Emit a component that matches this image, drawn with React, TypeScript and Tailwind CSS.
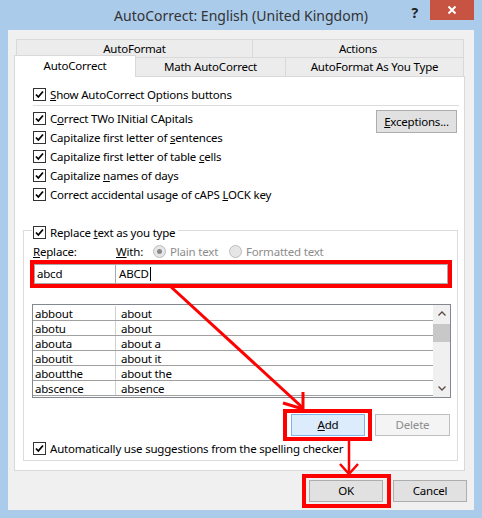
import type { ReactNode } from "react";

function Box() {
  return (
    <span className="flex h-[13px] w-[13px] shrink-0 items-center justify-center border border-[#333] bg-white">
      <svg width="11" height="11" viewBox="0 0 11 11">
        <path d="M2 5.5 L4.3 8 L9 2.5" fill="none" stroke="#000" strokeWidth="1.8" />
      </svg>
    </span>
  );
}

function Check({ children }: { children: ReactNode }) {
  return (
    <div className="flex h-[19px] items-center">
      <Box />
      <span className="ml-[4px] whitespace-nowrap">{children}</span>
    </div>
  );
}

function Radio({ on }: { on?: boolean }) {
  return (
    <span className="flex h-[13px] w-[13px] shrink-0 items-center justify-center rounded-full border border-[#bcbcbc] bg-[#e6e6e6]">
      {on && <span className="h-[5px] w-[5px] rounded-full bg-[#8a8a8a]" />}
    </span>
  );
}

const rows = [
  ["abbout", "about"],
  ["abotu", "about"],
  ["abouta", "about a"],
  ["aboutit", "about it"],
  ["aboutthe", "about the"],
  ["abscence", "absence"],
];

const tab = "flex items-center justify-center border-l border-t border-[#d9d9d9] bg-[#ececec] whitespace-nowrap";
const btn = "flex h-[22px] w-[74px] items-center justify-center border border-[#adadad] bg-[#e1e1e1]";

export default function App() {
  return (
    <div className="relative h-[518px] w-[482px] overflow-hidden bg-[#abcbeb] font-['Noto_Sans',sans-serif] text-[11.5px] tracking-[-0.2px] text-black">
      {/* title bar */}
      <div className="grid h-[30px] grid-cols-[1fr_auto_1fr] items-center">
        <div />
        <span className="text-[14px] tracking-normal text-[#333]">AutoCorrect: English (United Kingdom)</span>
        <div className="flex h-full items-start justify-end pr-[8px]">
          <span className="mr-[12px] mt-[2px] text-[14px] font-bold text-[#222]">?</span>
          <div className="flex h-[20px] w-[44px] items-center justify-center bg-[#c75343]">
            <svg width="10" height="10" viewBox="0 0 10 10">
              <path d="M1.5 1.5 L8.5 8.5 M8.5 1.5 L1.5 8.5" stroke="#fff" strokeWidth="2" />
            </svg>
          </div>
        </div>
      </div>

      {/* dialog body */}
      <div className="mx-[8px] h-[480px] bg-[#f0f0f0] pt-[9px]">
        <div className="ml-[8px] flex h-[18px] w-[448px]">
          <div className={`${tab} w-[236px]`}>AutoFormat</div>
          <div className={`${tab} flex-1 border-r`}>Actions</div>
        </div>
        <div className="ml-[6px] flex h-[19px] w-[450px] items-end">
          <div className="relative z-10 -mb-[1px] flex h-[22px] w-[122px] items-center justify-center border-l border-r border-t border-[#d9d9d9] bg-white pb-[2px]">
            AutoCorrect
          </div>
          <div className={`${tab} h-[19px] w-[149px] border-l-0`}>Math AutoCorrect</div>
          <div className={`${tab} h-[19px] flex-1 border-r`}>AutoFormat As You Type</div>
        </div>

        <div className="ml-[6px] h-[395px] w-[451px] border border-[#d9d9d9] bg-white pt-[8px]">
          <div className="ml-[18px]">
            <Check>
              <u>S</u>how AutoCorrect Options buttons
            </Check>
          </div>
          <div className="ml-[18px] mt-[1px] h-[1px] w-[426px] bg-[#dcdcdc]" />
          <div className="mt-[3px] flex justify-between pl-[18px] pr-[7px]">
            <div>
              <Check>
                C<u>o</u>rrect TWo INitial CApitals
              </Check>
              <Check>
                Capitalize first letter of <u>s</u>entences
              </Check>
              <Check>
                Capitalize first letter of table <u>c</u>ells
              </Check>
              <Check>
                Capitalize <u>n</u>ames of days
              </Check>
              <Check>
                Correct accidental usage of cAPS <u>L</u>OCK key
              </Check>
            </div>
            <div className={`${btn} mt-[1px] h-[23px] w-[81px]`}>
              <u>E</u>xceptions...
            </div>
          </div>

          {/* replace group */}
          <div className="ml-[8px] mt-[26px] h-[231px] w-[435px] border border-[#dcdcdc]">
            <div className="-mt-[8px] ml-[8px] flex h-[19px] w-fit items-center bg-white pl-[1px] pr-[3px]">
              <Box />
              <span className="ml-[4px] whitespace-nowrap">
                Replace <u>t</u>ext as you type
              </span>
            </div>
            <div className="mt-[1px] ml-[9px] flex h-[17px] items-center">
              <span className="w-[83px]">
                <u>R</u>eplace:
              </span>
              <span className="w-[37px]">
                <u>W</u>ith:
              </span>
              <Radio on />
              <span className="ml-[4px] w-[59px] text-[#8c8c8c]">Plain text</span>
              <Radio />
              <span className="ml-[4px] text-[#8c8c8c]">Formatted text</span>
            </div>
            <div className="ml-[6px] flex h-[28px] w-[422px] border-[4px] border-[#ff0000]">
              <div className="flex w-[82px] items-center border border-[#a8a8a8] pl-[2px]">abcd</div>
              <div className="flex flex-1 items-center border border-l-0 border-[#a8a8a8] pl-[3px]">
                ABCD<span className="ml-[1px] h-[14px] w-[1px] bg-black" />
              </div>
            </div>

            {/* list */}
            <div className="ml-[8px] mt-[16px] flex h-[94px] w-[419px] border border-[#828790]">
              <div className="flex-1 pt-[1px]">
                {rows.map(([a, b]) => (
                  <div key={a} className="flex h-[15px] items-center border-b border-[#a0a0a0] leading-[13px]">
                    <span className="flex h-full w-[83px] items-center border-r border-[#d0d0d0] pl-[2px]">{a}</span>
                    <span className="pl-[5px]">{b}</span>
                  </div>
                ))}
              </div>
              <div className="flex w-[17px] flex-col bg-[#f0f0f0]">
                <div className="flex h-[17px] items-center justify-center">
                  <svg width="8" height="5" viewBox="0 0 8 5">
                    <path d="M0.5 4.5 L4 1 L7.5 4.5" fill="none" stroke="#5a4a44" strokeWidth="1.3" />
                  </svg>
                </div>
                <div className="mt-[2px] h-[18px] bg-[#c8c8c8]" />
                <div className="flex-1" />
                <div className="flex h-[17px] items-center justify-center">
                  <svg width="8" height="5" viewBox="0 0 8 5">
                    <path d="M0.5 0.5 L4 4 L7.5 0.5" fill="none" stroke="#5a4a44" strokeWidth="1.3" />
                  </svg>
                </div>
              </div>
            </div>

            <div className="mt-[11px] flex justify-end pr-[7px]">
              <div className="h-[32px] w-[89px] border-[4px] border-[#ff0000] pl-[4px] pt-[1px]">
                <div className="flex h-[22px] w-[74px] items-center justify-center border border-[#7eb4ea] bg-[#dcecfc]">
                  <u>A</u>dd
                </div>
              </div>
              <div className={`${btn} ml-[3px] mt-[5px] w-[75px] border-[#bfbfbf] bg-[#f4f4f4] text-[#8c8c8c]`}>Delete</div>
            </div>
            <div className="-mt-[2px] ml-[9px]">
              <Check>
                Automatically use su<u>g</u>gestions from the spelling checker
              </Check>
            </div>
          </div>
        </div>

        <div className="mt-[3px] flex justify-end pr-[7px]">
          <div className="h-[34px] w-[89px] border-[4px] border-[#ff0000] pl-[3px] pt-[2px]">
            <div className={btn}>OK</div>
          </div>
          <div className={`${btn} ml-[2px] mt-[6px]`}>Cancel</div>
        </div>
      </div>

      {/* red annotation arrows */}
      <svg className="pointer-events-none absolute left-0 top-0" width="482" height="518">
        <g stroke="#ff0000" strokeWidth="3" fill="none">
          <path d="M170 286 L303 408" />
          <path d="M303 392 L303 409 M283 403 L303 409" />
          <path d="M349 440 L349 474" strokeWidth="2.5" />
          <path d="M340 464 L349 474 L358 464" strokeWidth="2.5" />
        </g>
      </svg>
    </div>
  );
}
